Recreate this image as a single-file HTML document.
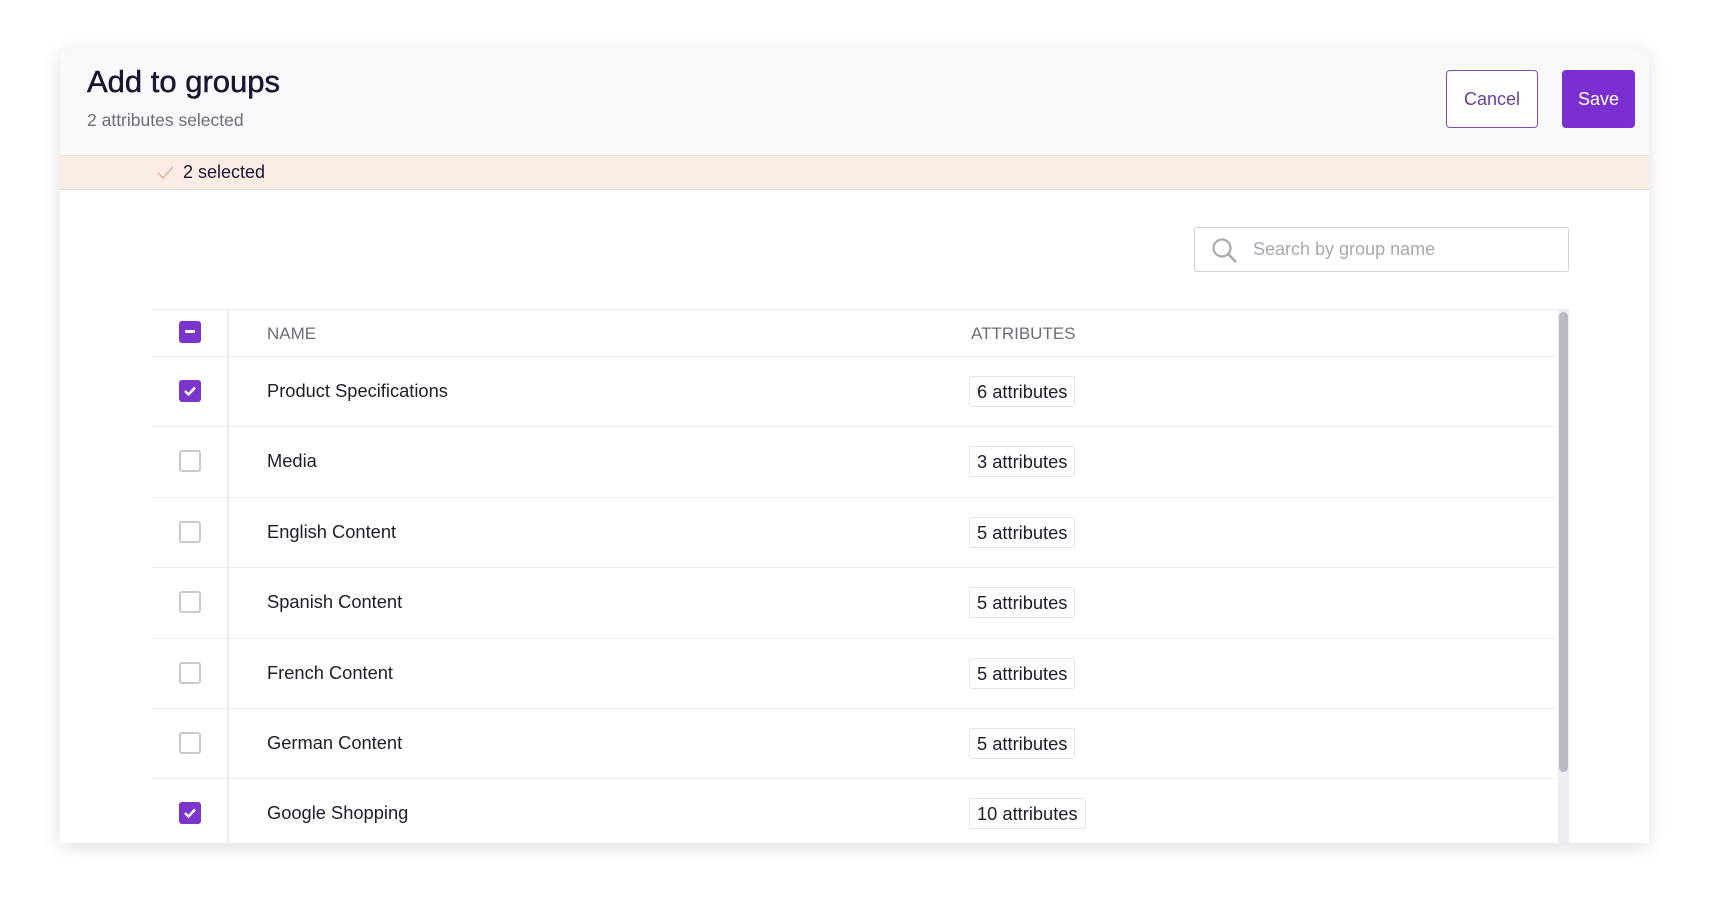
<!DOCTYPE html>
<html><head><meta charset="utf-8"><style>
*{box-sizing:border-box;margin:0;padding:0}
body{width:1720px;height:899px;background:#fff;font-family:"Liberation Sans",sans-serif;position:relative;overflow:hidden}
.panel{position:absolute;left:60px;top:49px;width:1589px;height:794px;background:#fff;box-shadow:0 4px 18px rgba(0,0,0,.13);overflow:hidden}
.hdr{position:absolute;left:0;top:0;width:100%;height:106px;background:#f8f9fb}
.t{position:absolute;left:27px;top:15px;font-size:31px;color:#1a1530;-webkit-text-stroke:0.5px #1a1530}
.s{position:absolute;left:27px;top:61px;font-size:17.5px;color:#6e6c78}
.btn{position:absolute;top:21px;height:58px;border-radius:4px;font-size:18px;display:flex;align-items:center;justify-content:center}
.cancel{left:1386px;width:92px;border:1.5px solid #7d4fa8;color:#6a3d99;background:#fff}
.save{left:1502px;width:73px;background:#7b2fd0;color:#fff}
.peach{position:absolute;left:0;top:106px;width:100%;height:35px;background:#fbece6;border-top:1px solid #efdcd3;border-bottom:1px solid #efd6cc}
.peach span{position:absolute;left:123px;top:6px;font-size:18px;color:#1a1530}
.search{position:absolute;left:1134px;top:178px;width:375px;height:45px;border:1.5px solid #cfcfd6;border-radius:3px}
.search span{position:absolute;left:58px;top:11px;font-size:18px;color:#a9a8b2}
.table{position:absolute;left:92px;top:260px;width:1417px;height:540px;border-top:1px solid #ececf0}
.row{position:absolute;left:0;width:1405px;height:70.4px;border-bottom:1.5px solid #ececf0}
.vd{position:absolute;left:75px;top:0;width:2px;height:540px;background:#ececf0}
.cb{position:absolute;left:27px;width:22px;height:22px;border-radius:3px}
.on{background:#7b35cc}
.off{border:2px solid #c9c9cf;background:#fff}
.name{position:absolute;left:115px;font-size:18.3px;color:#1f1c2b}
.badge{position:absolute;left:817px;height:31px;padding:0 7px;border:1px solid #e3e3e8;border-radius:3px;font-size:18.3px;color:#1f1c2b;line-height:29px}
.th{position:absolute;font-size:17px;color:#6e6c78;top:14px}
.sb{position:absolute;left:1406px;top:0;width:11px;height:540px;background:#ececf2}
.sb div{position:absolute;left:1px;top:2px;width:9px;height:460px;background:#bcb9c6;border-radius:5px}
</style></head><body>
<div class="panel">
<div class="hdr">
<div class="t">Add to groups</div>
<div class="s">2 attributes selected</div>
<div class="btn cancel">Cancel</div>
<div class="btn save">Save</div>
</div>
<div class="peach"><svg style="position:absolute;left:97px;top:10px" width="17" height="14" viewBox="0 0 17 14"><path d="M1 7l5 5L16 1" fill="none" stroke="#e0b4a6" stroke-width="1.6"/></svg><span>2 selected</span></div>
<div class="search"><svg style="position:absolute;left:16px;top:9px" width="27" height="27" viewBox="0 0 27 27"><circle cx="11" cy="11" r="8.5" fill="none" stroke="#aaa9b2" stroke-width="2.2"/><path d="M17.5 17.5L25 25" stroke="#aaa9b2" stroke-width="2.6"/></svg><span>Search by group name</span></div>
<div class="table">
<div class="row" style="top:0;height:47px"><div class="cb on" style="top:11px"><div style="position:absolute;left:6px;top:9px;width:10px;height:3px;background:#fff;border-radius:1px"></div></div><div class="th" style="left:115px">NAME</div><div class="th" style="left:819px">ATTRIBUTES</div></div>
<div class="row" style="top:47px"><div class="cb on" style="top:23px"><svg width="22" height="22"><path d="M6 11l3.5 3.5L16 7.5" fill="none" stroke="#fff" stroke-width="2.4"/></svg></div><div class="name" style="top:23px">Product Specifications</div><div class="badge" style="top:19px">6 attributes</div></div>
<div class="row" style="top:117.4px"><div class="cb off" style="top:23px"></div><div class="name" style="top:23px">Media</div><div class="badge" style="top:19px">3 attributes</div></div>
<div class="row" style="top:187.8px"><div class="cb off" style="top:23px"></div><div class="name" style="top:23px">English Content</div><div class="badge" style="top:19px">5 attributes</div></div>
<div class="row" style="top:258.2px"><div class="cb off" style="top:23px"></div><div class="name" style="top:23px">Spanish Content</div><div class="badge" style="top:19px">5 attributes</div></div>
<div class="row" style="top:328.6px"><div class="cb off" style="top:23px"></div><div class="name" style="top:23px">French Content</div><div class="badge" style="top:19px">5 attributes</div></div>
<div class="row" style="top:399px"><div class="cb off" style="top:23px"></div><div class="name" style="top:23px">German Content</div><div class="badge" style="top:19px">5 attributes</div></div>
<div class="row" style="top:469.4px;border:none"><div class="cb on" style="top:23px"><svg width="22" height="22"><path d="M6 11l3.5 3.5L16 7.5" fill="none" stroke="#fff" stroke-width="2.4"/></svg></div><div class="name" style="top:23px">Google Shopping</div><div class="badge" style="top:19px">10 attributes</div></div>
<div class="vd"></div>
<div class="sb"><div></div></div>
</div>
</div>
</body></html>
